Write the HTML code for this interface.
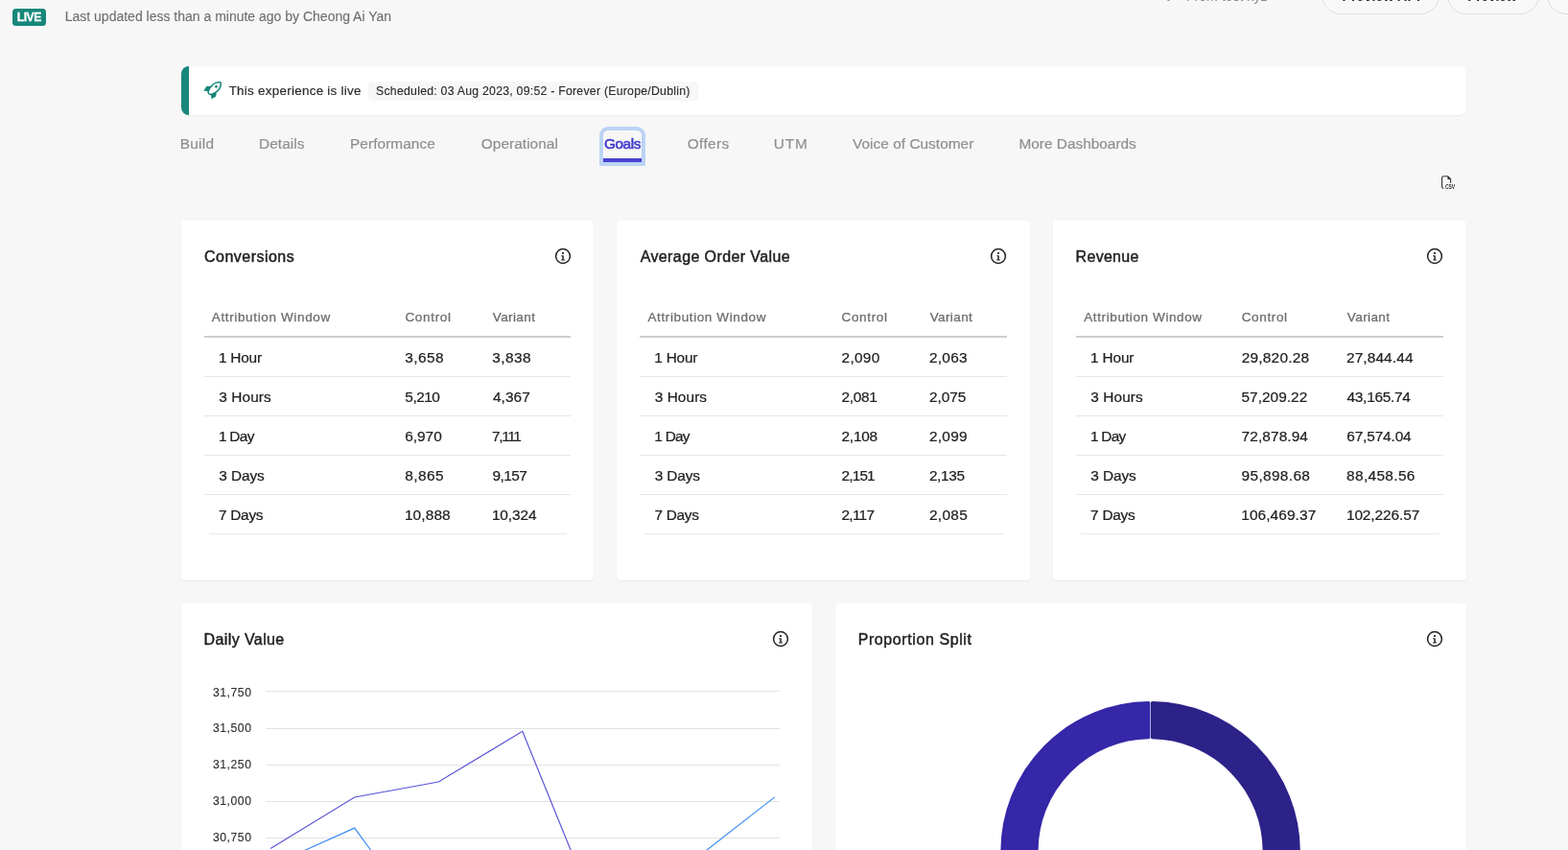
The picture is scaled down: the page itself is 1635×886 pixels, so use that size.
<!DOCTYPE html>
<html lang="en"><head><meta charset="utf-8"><title>Goals dashboard</title>
<style>
html,body{margin:0;padding:0}
body{width:1635px;height:886px;overflow:hidden;background:#f7f7f7;position:relative;font-family:"Liberation Sans", sans-serif;}
.abs{position:absolute}
.t{position:absolute;white-space:pre;line-height:1;display:block;margin:0;padding:0;font-weight:400;text-decoration:none}
.card{position:absolute;background:#fff;border-radius:4px;box-shadow:0 1px 2px rgba(0,0,0,.06),0 0 1px rgba(0,0,0,.03)}
.hl{position:absolute;height:1px;background:#e6e6e6}
.pill{position:absolute;border:1px solid #dcdcdc;border-radius:22px;background:#f8f8f8;box-sizing:border-box}
</style></head><body>
<div id="app" style="position:absolute;left:0;top:0;width:1635px;height:886px;overflow:hidden;will-change:transform">

<div class="pill" style="left:1377.5px;top:-25.500px;width:123px;height:40px"></div>
<div class="pill" style="left:1509px;top:-25.500px;width:95.500px;height:40px"></div>
<div class="pill" style="left:1613px;top:-25.500px;width:60px;height:40px"></div>
<div class="abs" style="left:1216.5px;top:-2.5px;width:3.5px;height:3.5px;border-radius:50%;background:#8a8a8a"></div>
<div class="abs" style="left:13px;top:9px;width:35px;height:18px;background:#17877a;border-radius:3.5px;box-shadow:0 0 0 1px rgba(255,255,255,.7)"></div>
<div class="abs" style="left:189px;top:69px;width:1340px;height:51px;background:#fff;border-radius:8px;box-shadow:0 1px 2px rgba(0,0,0,.05);overflow:hidden"><div style="width:8px;height:100%;background:#17877a"></div></div>
<div class="abs" style="left:383.5px;top:85px;width:344.5px;height:20px;background:#f7f7f7;border-radius:4px"></div>
<svg class="abs" style="left:205px;top:78px" width="40" height="32" viewBox="205 78 40 32"><g transform="translate(217.9 97.6) rotate(-43.4)" fill="#17877a">
<path d="M16.900 0C15.400 -1.900 12.800 -4.100 9.000 -4.100C5.800 -4.100 2.300 -3.300 0.300 -1.600C-0.300 -0.700 -0.300 0.700 0.300 1.600C2.300 3.300 5.800 4.100 9.000 4.100C12.800 4.100 15.400 1.900 16.900 0Z" fill="none" stroke="#17877a" stroke-width="1.500" stroke-linejoin="round"/>
<circle cx="10.500" cy="-0.100" r="1.400"/>
<path d="M3.300 -7.200L6.700 -4.300L1.200 -1.600L-2.000 -6.000Z"/>
<path d="M3.300 7.200L6.700 4.300L1.200 1.600L-2.000 6.000Z"/>
</g></svg>
<div class="abs" style="left:625px;top:132px;width:48px;height:40.500px;background:#bcd3f5;border-radius:9px 9px 0 0"></div>
<div class="abs" style="left:629px;top:136px;width:40px;height:33px;background:#f7f7f7;border-radius:5px 5px 0 0"></div>
<div class="abs" style="left:629px;top:165px;width:40px;height:4px;background:#4741d0"></div>
<svg class="abs" style="left:1500px;top:181px" width="20" height="18" viewBox="0 0 20 18"><path d="M5.400 15.300c-1.100 0-1.800-.7-1.800-1.800V4.500c0-1.100.7-1.800 1.800-1.800h4.300l2.900 2.900v4.200" fill="none" stroke="#333" stroke-width="1.100" stroke-linejoin="round" stroke-linecap="butt"/><path d="M9.400 2.600v2.300c0 .7.400 1.100 1.100 1.100h2.300z" fill="#333"/><text x="6.900" y="15.800" font-family="Liberation Sans, sans-serif" font-size="6.300" font-weight="700" fill="#333" textLength="10.300" lengthAdjust="spacingAndGlyphs">CSV</text></svg>
<div class="card" style="left:189px;top:230px;width:430px;height:375px"></div>
<div class="abs" style="left:213px;top:350px;width:382px;height:2px;background:#cfcfcf"></div>
<div class="hl" style="left:213px;top:392px;width:382px"></div>
<div class="hl" style="left:213px;top:433px;width:382px"></div>
<div class="hl" style="left:213px;top:474px;width:382px"></div>
<div class="hl" style="left:213px;top:515px;width:382px"></div>
<div class="hl" style="left:217.5px;top:556px;width:373px;background:#e9e9e9"></div>
<svg class="abs" style="left:577px;top:256.6px" width="20" height="20" viewBox="0 0 20 20"><circle cx="10" cy="10" r="7.400" fill="none" stroke="#222" stroke-width="1.500"/><circle cx="10" cy="6.9" r="1.05" fill="#222"/><path d="M8.200 9.200h2.600v4.200h1.100v1.000H8.100v-1.000h1.200v-3.200H8.200z" fill="#222"/></svg>
<div class="card" style="left:643px;top:230px;width:431px;height:375px"></div>
<div class="abs" style="left:667px;top:350px;width:383px;height:2px;background:#cfcfcf"></div>
<div class="hl" style="left:667px;top:392px;width:383px"></div>
<div class="hl" style="left:667px;top:433px;width:383px"></div>
<div class="hl" style="left:667px;top:474px;width:383px"></div>
<div class="hl" style="left:667px;top:515px;width:383px"></div>
<div class="hl" style="left:671.5px;top:556px;width:374px;background:#e9e9e9"></div>
<svg class="abs" style="left:1031px;top:256.6px" width="20" height="20" viewBox="0 0 20 20"><circle cx="10" cy="10" r="7.400" fill="none" stroke="#222" stroke-width="1.500"/><circle cx="10" cy="6.9" r="1.05" fill="#222"/><path d="M8.200 9.200h2.600v4.200h1.100v1.000H8.100v-1.000h1.200v-3.200H8.200z" fill="#222"/></svg>
<div class="card" style="left:1098px;top:230px;width:431px;height:375px"></div>
<div class="abs" style="left:1122px;top:350px;width:383px;height:2px;background:#cfcfcf"></div>
<div class="hl" style="left:1122px;top:392px;width:383px"></div>
<div class="hl" style="left:1122px;top:433px;width:383px"></div>
<div class="hl" style="left:1122px;top:474px;width:383px"></div>
<div class="hl" style="left:1122px;top:515px;width:383px"></div>
<div class="hl" style="left:1126.5px;top:556px;width:374px;background:#e9e9e9"></div>
<svg class="abs" style="left:1486px;top:256.6px" width="20" height="20" viewBox="0 0 20 20"><circle cx="10" cy="10" r="7.400" fill="none" stroke="#222" stroke-width="1.500"/><circle cx="10" cy="6.9" r="1.05" fill="#222"/><path d="M8.200 9.200h2.600v4.200h1.100v1.000H8.100v-1.000h1.200v-3.200H8.200z" fill="#222"/></svg>
<div class="card" style="left:189px;top:629px;width:658px;height:300px"></div>
<div class="card" style="left:871px;top:629px;width:658px;height:300px"></div>
<svg class="abs" style="left:804px;top:655.6px" width="20" height="20" viewBox="0 0 20 20"><circle cx="10" cy="10" r="7.400" fill="none" stroke="#222" stroke-width="1.500"/><circle cx="10" cy="6.9" r="1.05" fill="#222"/><path d="M8.200 9.200h2.600v4.200h1.100v1.000H8.100v-1.000h1.200v-3.200H8.200z" fill="#222"/></svg>
<svg class="abs" style="left:1486px;top:655.6px" width="20" height="20" viewBox="0 0 20 20"><circle cx="10" cy="10" r="7.400" fill="none" stroke="#222" stroke-width="1.500"/><circle cx="10" cy="6.9" r="1.05" fill="#222"/><path d="M8.200 9.200h2.600v4.200h1.100v1.000H8.100v-1.000h1.200v-3.200H8.200z" fill="#222"/></svg>
<svg class="abs" style="left:0;top:629px" width="870" height="257" viewBox="0 629 870 257"><line x1="277" x2="813" y1="720.5" y2="720.5" stroke="#e2e2e2" stroke-width="1"/><line x1="277" x2="813" y1="759.5" y2="759.5" stroke="#e2e2e2" stroke-width="1"/><line x1="277" x2="813" y1="797.5" y2="797.5" stroke="#e2e2e2" stroke-width="1"/><line x1="277" x2="813" y1="835.5" y2="835.5" stroke="#e2e2e2" stroke-width="1"/><line x1="277" x2="813" y1="873.5" y2="873.5" stroke="#e2e2e2" stroke-width="1"/>
<polyline fill="none" stroke="#5a55d6" stroke-width="1.200" stroke-linejoin="miter" points="282,884.4 369.7,831 457.2,815 544.8,762.3 632.4,978"/>
<polyline fill="none" stroke="#3f8ef5" stroke-width="1.200" points="282,902.4 369.7,863.1 457.2,982"/>
<polyline fill="none" stroke="#3f8ef5" stroke-width="1.200" points="720,899.3 807.8,830.9"/>
</svg>
<svg class="abs" style="left:871px;top:629px" width="658" height="257" viewBox="871 629 658 257"><path d="M1197.82 732.60 A154.7 154.7 0 0 0 1044.90 887.3 L1044.90 907.3 L1081.10 907.3 L1081.10 887.3 A118.5 118.5 0 0 1 1197.82 768.80 Z" fill="#3527a7" stroke="#3527a7" stroke-width="3.0" stroke-linejoin="round"/><path d="M1201.38 732.60 A154.7 154.7 0 0 1 1354.30 887.3 L1354.30 907.3 L1318.10 907.3 L1318.10 887.3 A118.5 118.5 0 0 0 1201.38 768.80 Z" fill="#2d2288" stroke="#2d2288" stroke-width="3.0" stroke-linejoin="round"/></svg>
<span class="t" style="left:67.72px;top:10.00px;font-size:14px;font-weight:400;color:#6e6e6e;letter-spacing:-0.001px;-webkit-text-stroke:0.12px #6e6e6e;">Last updated less than a minute ago by Cheong Ai Yan</span>
<span class="t" style="left:238.67px;top:88.00px;font-size:13.4px;font-weight:400;color:#2a2a2a;letter-spacing:0.278px;-webkit-text-stroke:0.18px #2a2a2a;">This experience is live</span>
<span class="t" style="left:392.04px;top:89.00px;font-size:12.3px;font-weight:400;color:#2a2a2a;letter-spacing:0.238px;-webkit-text-stroke:0.12px #2a2a2a;">Scheduled: 03 Aug 2023, 09:52 - Forever (Europe/Dublin)</span>
<span class="t" style="left:1236.80px;top:-11.00px;font-size:14px;font-weight:400;color:#8a8a8a;letter-spacing:0.065px;">From test xyz</span>
<span class="t" style="left:1399.50px;top:-11.00px;font-size:14px;font-weight:700;color:#222;letter-spacing:0.166px;">Preview API</span>
<span class="t" style="left:1530.20px;top:-11.00px;font-size:14px;font-weight:700;color:#222;letter-spacing:-0.240px;">Preview</span>
<span class="t" style="left:187.81px;top:142.00px;font-size:15.4px;font-weight:400;color:#8f8f8f;letter-spacing:0.237px;-webkit-text-stroke:0.2px #8f8f8f;">Build</span>
<span class="t" style="left:270.04px;top:142.00px;font-size:15.4px;font-weight:400;color:#8f8f8f;letter-spacing:0.080px;-webkit-text-stroke:0.2px #8f8f8f;">Details</span>
<span class="t" style="left:365.04px;top:142.00px;font-size:15.4px;font-weight:400;color:#8f8f8f;letter-spacing:0.062px;-webkit-text-stroke:0.2px #8f8f8f;">Performance</span>
<span class="t" style="left:501.79px;top:142.00px;font-size:15.4px;font-weight:400;color:#8f8f8f;letter-spacing:0.050px;-webkit-text-stroke:0.2px #8f8f8f;">Operational</span>
<span class="t" style="left:716.79px;top:142.00px;font-size:15.4px;font-weight:400;color:#8f8f8f;letter-spacing:0.355px;-webkit-text-stroke:0.2px #8f8f8f;">Offers</span>
<span class="t" style="left:806.86px;top:142.00px;font-size:15.4px;font-weight:400;color:#8f8f8f;letter-spacing:0.852px;-webkit-text-stroke:0.2px #8f8f8f;">UTM</span>
<span class="t" style="left:889.06px;top:142.00px;font-size:15.4px;font-weight:400;color:#8f8f8f;letter-spacing:0.033px;-webkit-text-stroke:0.2px #8f8f8f;">Voice of Customer</span>
<span class="t" style="left:1062.38px;top:142.00px;font-size:15.4px;font-weight:400;color:#8f8f8f;letter-spacing:0.008px;-webkit-text-stroke:0.2px #8f8f8f;">More Dashboards</span>
<span class="t" style="left:629.90px;top:142.00px;font-size:15.4px;font-weight:400;color:#423dcc;letter-spacing:-0.405px;-webkit-text-stroke:0.6px #423dcc;">Goals</span>
<h2 class="t" style="left:213.05px;top:260.00px;font-size:16px;font-weight:400;color:#1f1f1f;letter-spacing:0.467px;-webkit-text-stroke:0.45px #1f1f1f;">Conversions</h2>
<span class="t" style="left:220.75px;top:324.00px;font-size:13.5px;font-weight:400;color:#6b6b6b;letter-spacing:0.640px;-webkit-text-stroke:0.25px #6b6b6b;">Attribution Window</span>
<span class="t" style="left:422.39px;top:324.00px;font-size:13.5px;font-weight:400;color:#6b6b6b;letter-spacing:0.685px;-webkit-text-stroke:0.25px #6b6b6b;">Control</span>
<span class="t" style="left:513.84px;top:324.00px;font-size:13.5px;font-weight:400;color:#6b6b6b;letter-spacing:0.384px;-webkit-text-stroke:0.25px #6b6b6b;">Variant</span>
<span class="t" style="left:227.91px;top:365.00px;font-size:15.4px;font-weight:400;color:#222;letter-spacing:-0.210px;-webkit-text-stroke:0.22px #222;">1 Hour</span>
<span class="t" style="left:422.29px;top:365.00px;font-size:15.4px;font-weight:400;color:#222;letter-spacing:0.462px;-webkit-text-stroke:0.22px #222;">3,658</span>
<span class="t" style="left:513.29px;top:365.00px;font-size:15.4px;font-weight:400;color:#222;letter-spacing:0.462px;-webkit-text-stroke:0.22px #222;">3,838</span>
<span class="t" style="left:228.32px;top:406.00px;font-size:15.4px;font-weight:400;color:#222;letter-spacing:0.093px;-webkit-text-stroke:0.22px #222;">3 Hours</span>
<span class="t" style="left:422.30px;top:406.00px;font-size:15.4px;font-weight:400;color:#222;letter-spacing:-0.476px;-webkit-text-stroke:0.22px #222;">5,210</span>
<span class="t" style="left:513.93px;top:406.00px;font-size:15.4px;font-weight:400;color:#222;letter-spacing:0.063px;-webkit-text-stroke:0.22px #222;">4,367</span>
<span class="t" style="left:227.91px;top:447.00px;font-size:15.4px;font-weight:400;color:#222;letter-spacing:-0.697px;-webkit-text-stroke:0.22px #222;">1 Day</span>
<span class="t" style="left:422.24px;top:447.00px;font-size:15.4px;font-weight:400;color:#222;letter-spacing:-0.007px;-webkit-text-stroke:0.22px #222;">6,970</span>
<span class="t" style="left:513.11px;top:447.00px;font-size:15.4px;font-weight:400;color:#222;letter-spacing:-1.364px;-webkit-text-stroke:0.22px #222;">7,111</span>
<span class="t" style="left:228.32px;top:488.00px;font-size:15.4px;font-weight:400;color:#222;letter-spacing:-0.091px;-webkit-text-stroke:0.22px #222;">3 Days</span>
<span class="t" style="left:422.27px;top:488.00px;font-size:15.4px;font-weight:400;color:#222;letter-spacing:0.425px;-webkit-text-stroke:0.22px #222;">8,865</span>
<span class="t" style="left:513.51px;top:488.00px;font-size:15.4px;font-weight:400;color:#222;letter-spacing:-0.581px;-webkit-text-stroke:0.22px #222;">9,157</span>
<span class="t" style="left:227.92px;top:529.00px;font-size:15.4px;font-weight:400;color:#222;letter-spacing:-0.255px;-webkit-text-stroke:0.22px #222;">7 Days</span>
<span class="t" style="left:421.90px;top:529.00px;font-size:15.4px;font-weight:400;color:#222;letter-spacing:0.140px;-webkit-text-stroke:0.22px #222;">10,888</span>
<span class="t" style="left:512.90px;top:529.00px;font-size:15.4px;font-weight:400;color:#222;letter-spacing:-0.102px;-webkit-text-stroke:0.22px #222;">10,324</span>
<h2 class="t" style="left:667.65px;top:260.00px;font-size:16px;font-weight:400;color:#1f1f1f;letter-spacing:0.400px;-webkit-text-stroke:0.45px #1f1f1f;">Average Order Value</h2>
<span class="t" style="left:675.50px;top:324.00px;font-size:13.5px;font-weight:400;color:#6b6b6b;letter-spacing:0.610px;-webkit-text-stroke:0.25px #6b6b6b;">Attribution Window</span>
<span class="t" style="left:877.57px;top:324.00px;font-size:13.5px;font-weight:400;color:#6b6b6b;letter-spacing:0.648px;-webkit-text-stroke:0.25px #6b6b6b;">Control</span>
<span class="t" style="left:969.66px;top:324.00px;font-size:13.5px;font-weight:400;color:#6b6b6b;letter-spacing:0.404px;-webkit-text-stroke:0.25px #6b6b6b;">Variant</span>
<span class="t" style="left:682.25px;top:365.00px;font-size:15.4px;font-weight:400;color:#222;letter-spacing:-0.194px;-webkit-text-stroke:0.22px #222;">1 Hour</span>
<span class="t" style="left:877.54px;top:365.00px;font-size:15.4px;font-weight:400;color:#222;letter-spacing:0.292px;-webkit-text-stroke:0.22px #222;">2,090</span>
<span class="t" style="left:968.89px;top:365.00px;font-size:15.4px;font-weight:400;color:#222;letter-spacing:0.294px;-webkit-text-stroke:0.22px #222;">2,063</span>
<span class="t" style="left:682.65px;top:406.00px;font-size:15.4px;font-weight:400;color:#222;letter-spacing:0.087px;-webkit-text-stroke:0.22px #222;">3 Hours</span>
<span class="t" style="left:877.54px;top:406.00px;font-size:15.4px;font-weight:400;color:#222;letter-spacing:-0.295px;-webkit-text-stroke:0.22px #222;">2,081</span>
<span class="t" style="left:968.89px;top:406.00px;font-size:15.4px;font-weight:400;color:#222;letter-spacing:-0.042px;-webkit-text-stroke:0.22px #222;">2,075</span>
<span class="t" style="left:682.25px;top:447.00px;font-size:15.4px;font-weight:400;color:#222;letter-spacing:-0.728px;-webkit-text-stroke:0.22px #222;">1 Day</span>
<span class="t" style="left:877.54px;top:447.00px;font-size:15.4px;font-weight:400;color:#222;letter-spacing:-0.230px;-webkit-text-stroke:0.22px #222;">2,108</span>
<span class="t" style="left:968.89px;top:447.00px;font-size:15.4px;font-weight:400;color:#222;letter-spacing:0.316px;-webkit-text-stroke:0.22px #222;">2,099</span>
<span class="t" style="left:682.65px;top:488.00px;font-size:15.4px;font-weight:400;color:#222;letter-spacing:-0.098px;-webkit-text-stroke:0.22px #222;">3 Days</span>
<span class="t" style="left:877.54px;top:488.00px;font-size:15.4px;font-weight:400;color:#222;letter-spacing:-0.842px;-webkit-text-stroke:0.22px #222;">2,151</span>
<span class="t" style="left:968.89px;top:488.00px;font-size:15.4px;font-weight:400;color:#222;letter-spacing:-0.337px;-webkit-text-stroke:0.22px #222;">2,135</span>
<span class="t" style="left:682.61px;top:529.00px;font-size:15.4px;font-weight:400;color:#222;letter-spacing:-0.330px;-webkit-text-stroke:0.22px #222;">7 Days</span>
<span class="t" style="left:877.54px;top:529.00px;font-size:15.4px;font-weight:400;color:#222;letter-spacing:-0.736px;-webkit-text-stroke:0.22px #222;">2,117</span>
<span class="t" style="left:968.89px;top:529.00px;font-size:15.4px;font-weight:400;color:#222;letter-spacing:0.348px;-webkit-text-stroke:0.22px #222;">2,085</span>
<h2 class="t" style="left:1121.62px;top:260.00px;font-size:16px;font-weight:400;color:#1f1f1f;letter-spacing:0.283px;-webkit-text-stroke:0.45px #1f1f1f;">Revenue</h2>
<span class="t" style="left:1130.24px;top:324.00px;font-size:13.5px;font-weight:400;color:#6b6b6b;letter-spacing:0.606px;-webkit-text-stroke:0.25px #6b6b6b;">Attribution Window</span>
<span class="t" style="left:1294.72px;top:324.00px;font-size:13.5px;font-weight:400;color:#6b6b6b;letter-spacing:0.631px;-webkit-text-stroke:0.25px #6b6b6b;">Control</span>
<span class="t" style="left:1404.84px;top:324.00px;font-size:13.5px;font-weight:400;color:#6b6b6b;letter-spacing:0.397px;-webkit-text-stroke:0.25px #6b6b6b;">Variant</span>
<span class="t" style="left:1136.90px;top:365.00px;font-size:15.4px;font-weight:400;color:#222;letter-spacing:-0.131px;-webkit-text-stroke:0.22px #222;">1 Hour</span>
<span class="t" style="left:1294.66px;top:365.00px;font-size:15.4px;font-weight:400;color:#222;letter-spacing:0.245px;-webkit-text-stroke:0.22px #222;">29,820.28</span>
<span class="t" style="left:1403.96px;top:365.00px;font-size:15.4px;font-weight:400;color:#222;letter-spacing:0.129px;-webkit-text-stroke:0.22px #222;">27,844.44</span>
<span class="t" style="left:1137.29px;top:406.00px;font-size:15.4px;font-weight:400;color:#222;letter-spacing:0.101px;-webkit-text-stroke:0.22px #222;">3 Hours</span>
<span class="t" style="left:1294.50px;top:406.00px;font-size:15.4px;font-weight:400;color:#222;letter-spacing:0.029px;-webkit-text-stroke:0.22px #222;">57,209.22</span>
<span class="t" style="left:1404.54px;top:406.00px;font-size:15.4px;font-weight:400;color:#222;letter-spacing:-0.264px;-webkit-text-stroke:0.22px #222;">43,165.74</span>
<span class="t" style="left:1136.90px;top:447.00px;font-size:15.4px;font-weight:400;color:#222;letter-spacing:-0.726px;-webkit-text-stroke:0.22px #222;">1 Day</span>
<span class="t" style="left:1294.61px;top:447.00px;font-size:15.4px;font-weight:400;color:#222;letter-spacing:0.102px;-webkit-text-stroke:0.22px #222;">72,878.94</span>
<span class="t" style="left:1404.27px;top:447.00px;font-size:15.4px;font-weight:400;color:#222;letter-spacing:-0.133px;-webkit-text-stroke:0.22px #222;">67,574.04</span>
<span class="t" style="left:1137.29px;top:488.00px;font-size:15.4px;font-weight:400;color:#222;letter-spacing:-0.082px;-webkit-text-stroke:0.22px #222;">3 Days</span>
<span class="t" style="left:1294.58px;top:488.00px;font-size:15.4px;font-weight:400;color:#222;letter-spacing:0.352px;-webkit-text-stroke:0.22px #222;">95,898.68</span>
<span class="t" style="left:1404.08px;top:488.00px;font-size:15.4px;font-weight:400;color:#222;letter-spacing:0.356px;-webkit-text-stroke:0.22px #222;">88,458.56</span>
<span class="t" style="left:1137.11px;top:529.00px;font-size:15.4px;font-weight:400;color:#222;letter-spacing:-0.249px;-webkit-text-stroke:0.22px #222;">7 Days</span>
<span class="t" style="left:1294.25px;top:529.00px;font-size:15.4px;font-weight:400;color:#222;letter-spacing:0.104px;-webkit-text-stroke:0.22px #222;">106,469.37</span>
<span class="t" style="left:1403.91px;top:529.00px;font-size:15.4px;font-weight:400;color:#222;letter-spacing:-0.082px;-webkit-text-stroke:0.22px #222;">102,226.57</span>
<h2 class="t" style="left:212.62px;top:659.00px;font-size:16px;font-weight:400;color:#1f1f1f;letter-spacing:0.392px;-webkit-text-stroke:0.45px #1f1f1f;">Daily Value</h2>
<h2 class="t" style="left:894.63px;top:659.00px;font-size:16px;font-weight:400;color:#1f1f1f;letter-spacing:0.594px;-webkit-text-stroke:0.45px #1f1f1f;">Proportion Split</h2>
<span class="t" style="left:221.95px;top:716.00px;font-size:12.2px;font-weight:400;color:#2e2e2e;letter-spacing:0.544px;-webkit-text-stroke:0.12px #2e2e2e;">31,750</span>
<span class="t" style="left:221.95px;top:753.00px;font-size:12.2px;font-weight:400;color:#2e2e2e;letter-spacing:0.544px;-webkit-text-stroke:0.12px #2e2e2e;">31,500</span>
<span class="t" style="left:221.95px;top:791.00px;font-size:12.2px;font-weight:400;color:#2e2e2e;letter-spacing:0.544px;-webkit-text-stroke:0.12px #2e2e2e;">31,250</span>
<span class="t" style="left:221.95px;top:829.00px;font-size:12.2px;font-weight:400;color:#2e2e2e;letter-spacing:0.544px;-webkit-text-stroke:0.12px #2e2e2e;">31,000</span>
<span class="t" style="left:221.95px;top:867.00px;font-size:12.2px;font-weight:400;color:#2e2e2e;letter-spacing:0.544px;-webkit-text-stroke:0.12px #2e2e2e;">30,750</span>
<span class="t" style="left:17.70px;top:12.00px;font-size:12.2px;font-weight:700;color:#fff;letter-spacing:-0.465px;-webkit-text-stroke:0.3px #fff;">LIVE</span>
</div>
</body></html>
